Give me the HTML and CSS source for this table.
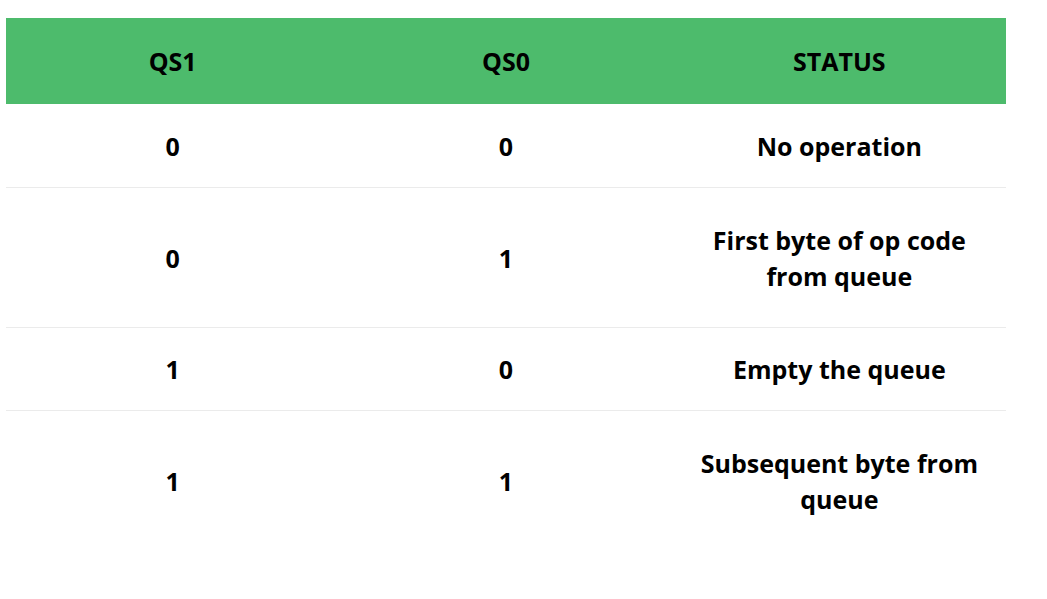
FILE: index.html
```html
<!DOCTYPE html>
<html>
<head>
<meta charset="utf-8">
<link rel="stylesheet" href="styles.css">
</head>
<body>
<div class="table">
  <div class="cell head">QS1</div>
  <div class="cell head">QS0</div>
  <div class="cell head">STATUS</div>

  <div class="cell line">0</div>
  <div class="cell line">0</div>
  <div class="cell line">No operation</div>

  <div class="cell line">0</div>
  <div class="cell line">1</div>
  <div class="cell line">First byte of op code<br>from queue</div>

  <div class="cell line">1</div>
  <div class="cell line">0</div>
  <div class="cell line">Empty the queue</div>

  <div class="cell">1</div>
  <div class="cell">1</div>
  <div class="cell">Subsequent byte from<br>queue</div>
</div>
</body>
</html>
```
FILE: styles.css
```css
html, body {
  margin: 0;
  padding: 0;
  background: #ffffff;
}
body {
  padding: 18px 0 0 6px;
  font-family: "Open Sans", "Liberation Sans", sans-serif;
  font-weight: 700;
  color: #000;
}
.table {
  width: 1000px;
  display: grid;
  grid-template-columns: 1fr 1fr 1fr;
  grid-template-rows: 86px 84px 140px 83px 140px;
}
.cell {
  display: flex;
  align-items: center;
  justify-content: center;
  text-align: center;
  font-size: 25px;
  line-height: 36px;
  padding-top: 0;
  box-sizing: border-box;
}
.head {
  background: #4dbb6c;
  padding-top: 0;
}
.line {
  border-bottom: 1px solid #ebebeb;
}
```
